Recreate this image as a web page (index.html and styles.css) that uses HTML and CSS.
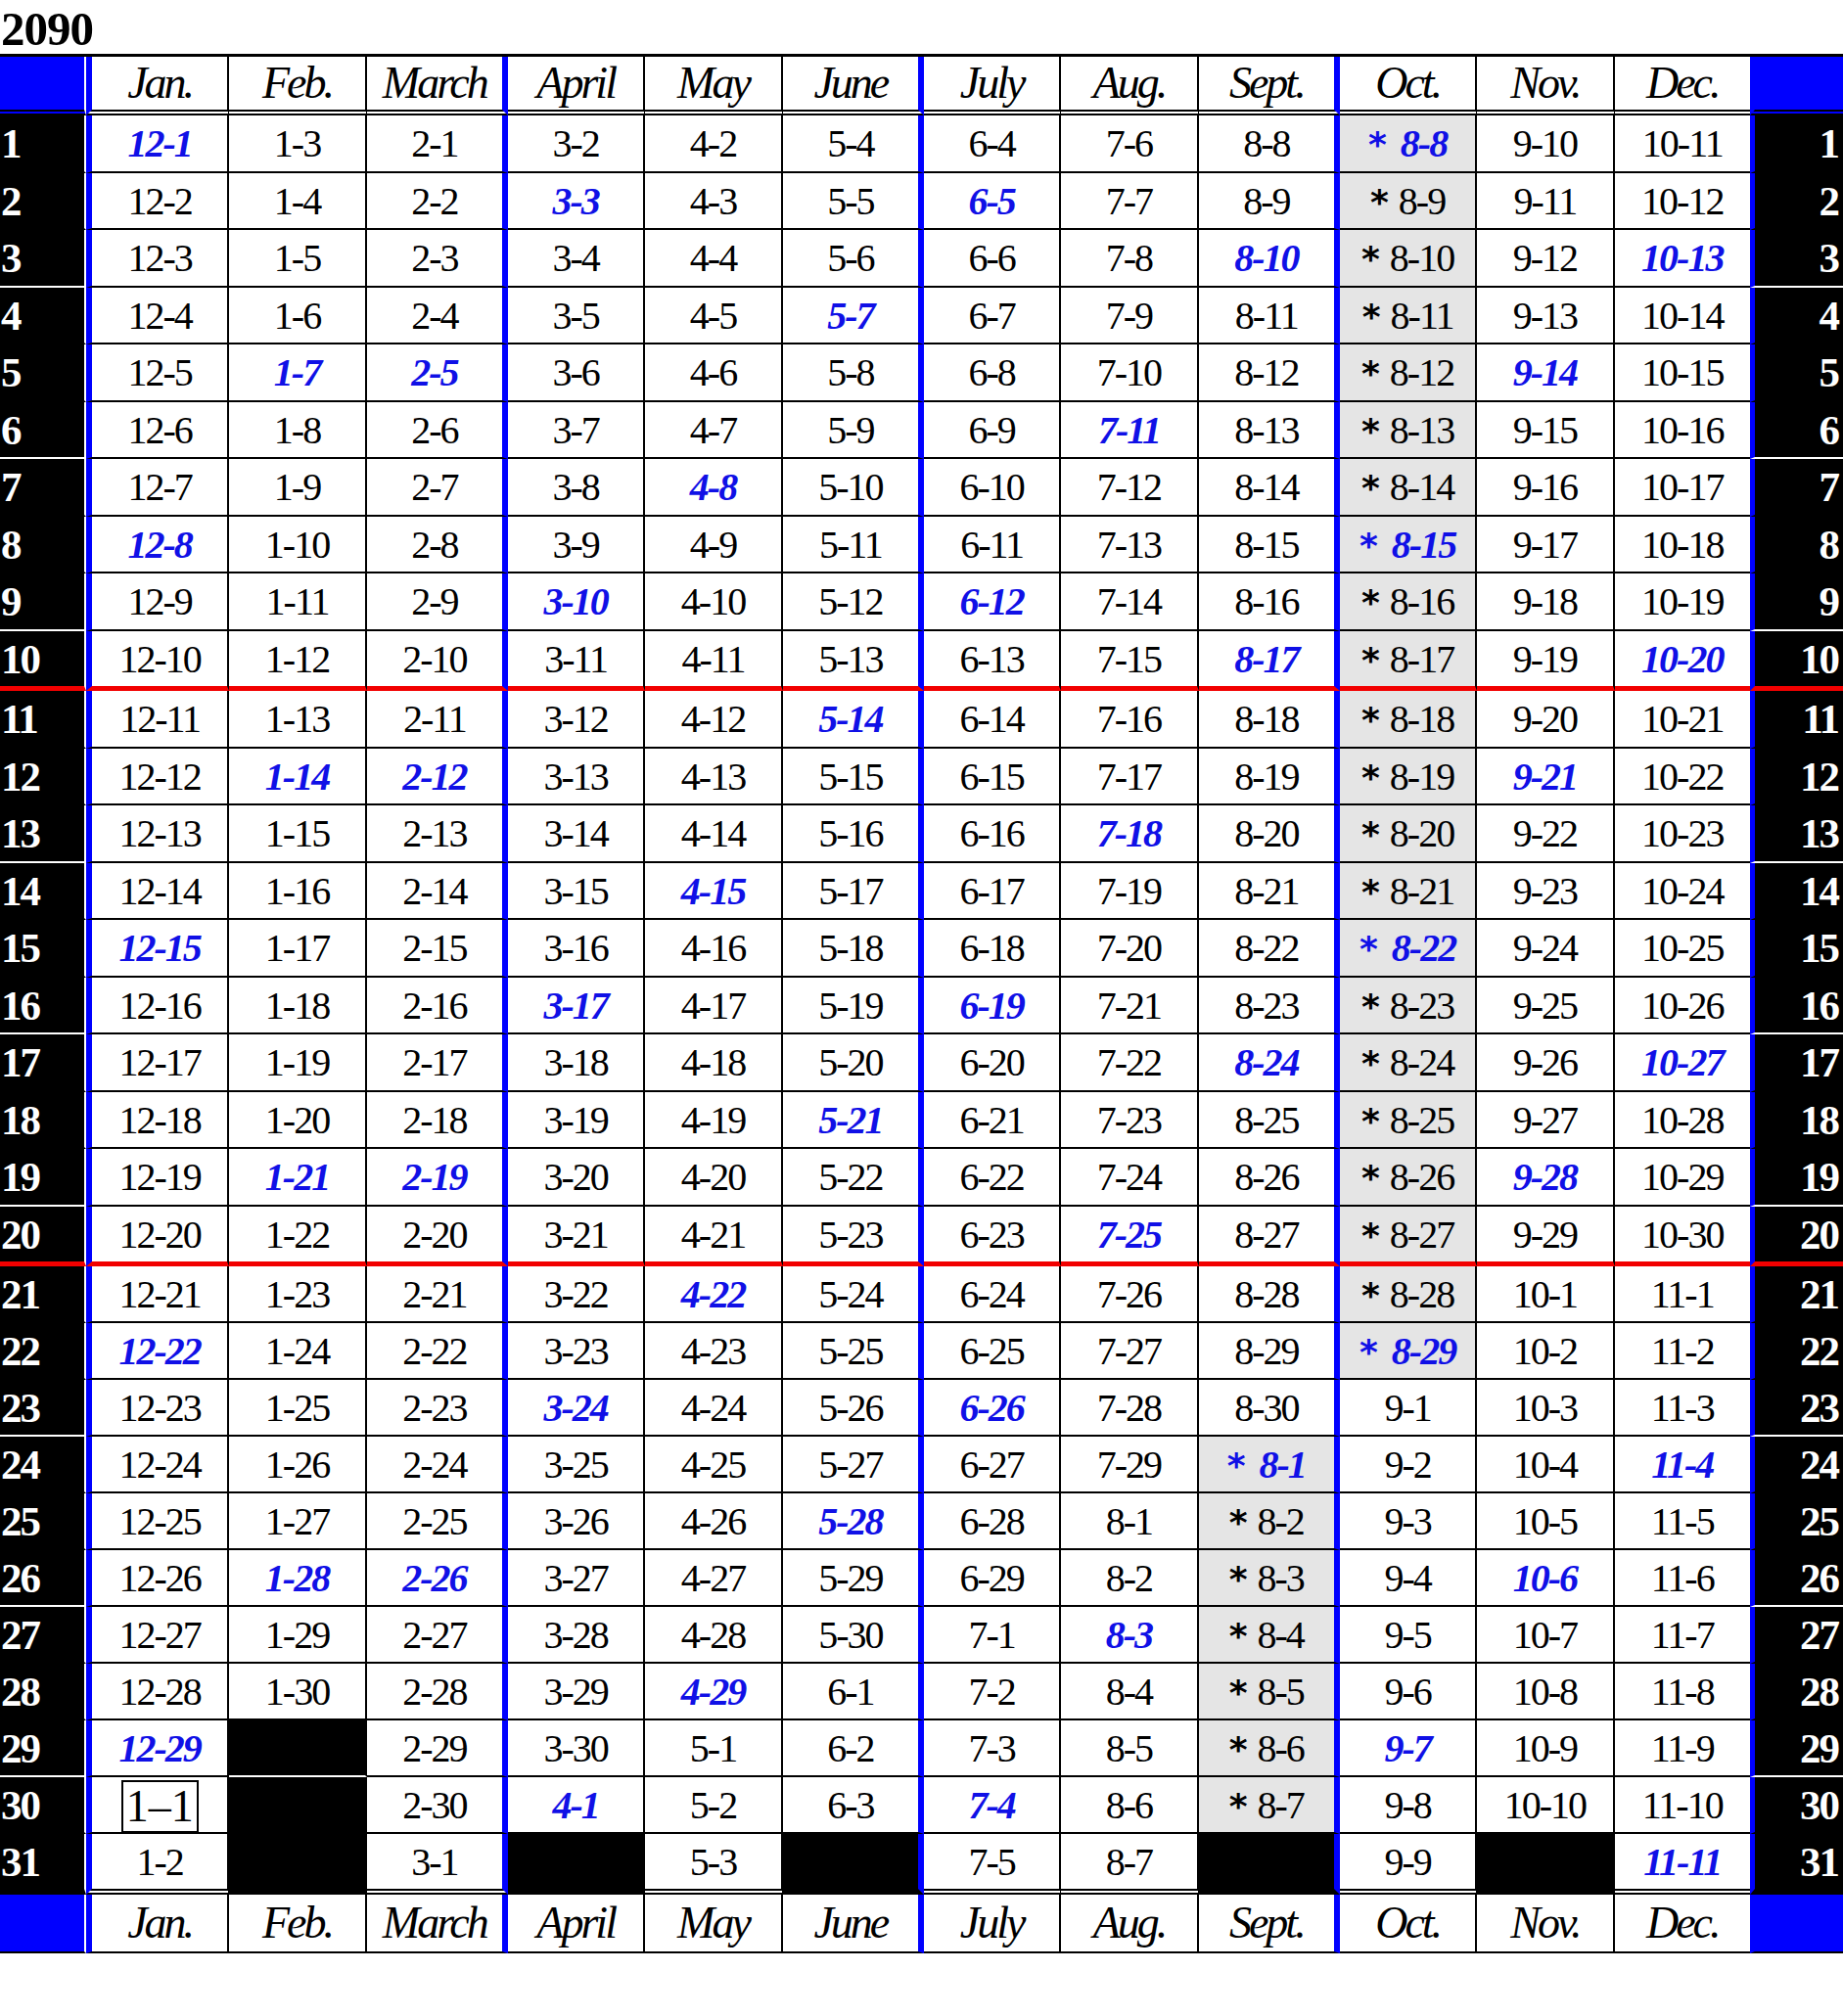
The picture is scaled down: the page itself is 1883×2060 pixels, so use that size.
FILE: index.html
```html
<!DOCTYPE html>
<html lang="en">
<head>
<meta charset="utf-8">
<title>2090</title>
<link rel="stylesheet" href="styles.css">
</head>
<body>
<div class="page">
  <div class="title">2090</div>
  <div class="cal">
    <div class="row mon head"><div class="l bl"></div><div>Jan.</div><div>Feb.</div><div>March</div><div>April</div><div>May</div><div>June</div><div>July</div><div>Aug.</div><div>Sept.</div><div>Oct.</div><div>Nov.</div><div>Dec.</div><div class="r bl"></div></div>

    <div class="row"><div class="l">1</div><div class="h">12-1</div><div>1-3</div><div>2-1</div><div>3-2</div><div>4-2</div><div>5-4</div><div>6-4</div><div>7-6</div><div>8-8</div><div class="g h"><b class="a">*</b> 8-8</div><div>9-10</div><div>10-11</div><div class="r">1</div></div>
    <div class="row"><div class="l">2</div><div>12-2</div><div>1-4</div><div>2-2</div><div class="h">3-3</div><div>4-3</div><div>5-5</div><div class="h">6-5</div><div>7-7</div><div>8-9</div><div class="g"><b class="a">*</b> 8-9</div><div>9-11</div><div>10-12</div><div class="r">2</div></div>
    <div class="row sep"><div class="l">3</div><div>12-3</div><div>1-5</div><div>2-3</div><div>3-4</div><div>4-4</div><div>5-6</div><div>6-6</div><div>7-8</div><div class="h">8-10</div><div class="g"><b class="a">*</b> 8-10</div><div>9-12</div><div class="h">10-13</div><div class="r">3</div></div>
    <div class="row"><div class="l">4</div><div>12-4</div><div>1-6</div><div>2-4</div><div>3-5</div><div>4-5</div><div class="h">5-7</div><div>6-7</div><div>7-9</div><div>8-11</div><div class="g"><b class="a">*</b> 8-11</div><div>9-13</div><div>10-14</div><div class="r">4</div></div>
    <div class="row"><div class="l">5</div><div>12-5</div><div class="h">1-7</div><div class="h">2-5</div><div>3-6</div><div>4-6</div><div>5-8</div><div>6-8</div><div>7-10</div><div>8-12</div><div class="g"><b class="a">*</b> 8-12</div><div class="h">9-14</div><div>10-15</div><div class="r">5</div></div>
    <div class="row sep"><div class="l">6</div><div>12-6</div><div>1-8</div><div>2-6</div><div>3-7</div><div>4-7</div><div>5-9</div><div>6-9</div><div class="h">7-11</div><div>8-13</div><div class="g"><b class="a">*</b> 8-13</div><div>9-15</div><div>10-16</div><div class="r">6</div></div>
    <div class="row"><div class="l">7</div><div>12-7</div><div>1-9</div><div>2-7</div><div>3-8</div><div class="h">4-8</div><div>5-10</div><div>6-10</div><div>7-12</div><div>8-14</div><div class="g"><b class="a">*</b> 8-14</div><div>9-16</div><div>10-17</div><div class="r">7</div></div>
    <div class="row"><div class="l">8</div><div class="h">12-8</div><div>1-10</div><div>2-8</div><div>3-9</div><div>4-9</div><div>5-11</div><div>6-11</div><div>7-13</div><div>8-15</div><div class="g h"><b class="a">*</b> 8-15</div><div>9-17</div><div>10-18</div><div class="r">8</div></div>
    <div class="row sep"><div class="l">9</div><div>12-9</div><div>1-11</div><div>2-9</div><div class="h">3-10</div><div>4-10</div><div>5-12</div><div class="h">6-12</div><div>7-14</div><div>8-16</div><div class="g"><b class="a">*</b> 8-16</div><div>9-18</div><div>10-19</div><div class="r">9</div></div>
    <div class="row red"><div class="l">10</div><div>12-10</div><div>1-12</div><div>2-10</div><div>3-11</div><div>4-11</div><div>5-13</div><div>6-13</div><div>7-15</div><div class="h">8-17</div><div class="g"><b class="a">*</b> 8-17</div><div>9-19</div><div class="h">10-20</div><div class="r">10</div></div>

    <div class="row"><div class="l">11</div><div>12-11</div><div>1-13</div><div>2-11</div><div>3-12</div><div>4-12</div><div class="h">5-14</div><div>6-14</div><div>7-16</div><div>8-18</div><div class="g"><b class="a">*</b> 8-18</div><div>9-20</div><div>10-21</div><div class="r">11</div></div>
    <div class="row"><div class="l">12</div><div>12-12</div><div class="h">1-14</div><div class="h">2-12</div><div>3-13</div><div>4-13</div><div>5-15</div><div>6-15</div><div>7-17</div><div>8-19</div><div class="g"><b class="a">*</b> 8-19</div><div class="h">9-21</div><div>10-22</div><div class="r">12</div></div>
    <div class="row sep"><div class="l">13</div><div>12-13</div><div>1-15</div><div>2-13</div><div>3-14</div><div>4-14</div><div>5-16</div><div>6-16</div><div class="h">7-18</div><div>8-20</div><div class="g"><b class="a">*</b> 8-20</div><div>9-22</div><div>10-23</div><div class="r">13</div></div>
    <div class="row"><div class="l">14</div><div>12-14</div><div>1-16</div><div>2-14</div><div>3-15</div><div class="h">4-15</div><div>5-17</div><div>6-17</div><div>7-19</div><div>8-21</div><div class="g"><b class="a">*</b> 8-21</div><div>9-23</div><div>10-24</div><div class="r">14</div></div>
    <div class="row"><div class="l">15</div><div class="h">12-15</div><div>1-17</div><div>2-15</div><div>3-16</div><div>4-16</div><div>5-18</div><div>6-18</div><div>7-20</div><div>8-22</div><div class="g h"><b class="a">*</b> 8-22</div><div>9-24</div><div>10-25</div><div class="r">15</div></div>
    <div class="row sep"><div class="l">16</div><div>12-16</div><div>1-18</div><div>2-16</div><div class="h">3-17</div><div>4-17</div><div>5-19</div><div class="h">6-19</div><div>7-21</div><div>8-23</div><div class="g"><b class="a">*</b> 8-23</div><div>9-25</div><div>10-26</div><div class="r">16</div></div>
    <div class="row"><div class="l">17</div><div>12-17</div><div>1-19</div><div>2-17</div><div>3-18</div><div>4-18</div><div>5-20</div><div>6-20</div><div>7-22</div><div class="h">8-24</div><div class="g"><b class="a">*</b> 8-24</div><div>9-26</div><div class="h">10-27</div><div class="r">17</div></div>
    <div class="row"><div class="l">18</div><div>12-18</div><div>1-20</div><div>2-18</div><div>3-19</div><div>4-19</div><div class="h">5-21</div><div>6-21</div><div>7-23</div><div>8-25</div><div class="g"><b class="a">*</b> 8-25</div><div>9-27</div><div>10-28</div><div class="r">18</div></div>
    <div class="row sep"><div class="l">19</div><div>12-19</div><div class="h">1-21</div><div class="h">2-19</div><div>3-20</div><div>4-20</div><div>5-22</div><div>6-22</div><div>7-24</div><div>8-26</div><div class="g"><b class="a">*</b> 8-26</div><div class="h">9-28</div><div>10-29</div><div class="r">19</div></div>
    <div class="row red"><div class="l">20</div><div>12-20</div><div>1-22</div><div>2-20</div><div>3-21</div><div>4-21</div><div>5-23</div><div>6-23</div><div class="h">7-25</div><div>8-27</div><div class="g"><b class="a">*</b> 8-27</div><div>9-29</div><div>10-30</div><div class="r">20</div></div>

    <div class="row lo"><div class="l">21</div><div>12-21</div><div>1-23</div><div>2-21</div><div>3-22</div><div class="h">4-22</div><div>5-24</div><div>6-24</div><div>7-26</div><div>8-28</div><div class="g"><b class="a">*</b> 8-28</div><div>10-1</div><div>11-1</div><div class="r">21</div></div>
    <div class="row lo"><div class="l">22</div><div class="h">12-22</div><div>1-24</div><div>2-22</div><div>3-23</div><div>4-23</div><div>5-25</div><div>6-25</div><div>7-27</div><div>8-29</div><div class="g h"><b class="a">*</b> 8-29</div><div>10-2</div><div>11-2</div><div class="r">22</div></div>
    <div class="row lo sep"><div class="l">23</div><div>12-23</div><div>1-25</div><div>2-23</div><div class="h">3-24</div><div>4-24</div><div>5-26</div><div class="h">6-26</div><div>7-28</div><div>8-30</div><div>9-1</div><div>10-3</div><div>11-3</div><div class="r">23</div></div>
    <div class="row lo"><div class="l">24</div><div>12-24</div><div>1-26</div><div>2-24</div><div>3-25</div><div>4-25</div><div>5-27</div><div>6-27</div><div>7-29</div><div class="g h"><b class="a">*</b> 8-1</div><div>9-2</div><div>10-4</div><div class="h">11-4</div><div class="r">24</div></div>
    <div class="row lo"><div class="l">25</div><div>12-25</div><div>1-27</div><div>2-25</div><div>3-26</div><div>4-26</div><div class="h">5-28</div><div>6-28</div><div>8-1</div><div class="g"><b class="a">*</b> 8-2</div><div>9-3</div><div>10-5</div><div>11-5</div><div class="r">25</div></div>
    <div class="row lo sep"><div class="l">26</div><div>12-26</div><div class="h">1-28</div><div class="h">2-26</div><div>3-27</div><div>4-27</div><div>5-29</div><div>6-29</div><div>8-2</div><div class="g"><b class="a">*</b> 8-3</div><div>9-4</div><div class="h">10-6</div><div>11-6</div><div class="r">26</div></div>
    <div class="row lo"><div class="l">27</div><div>12-27</div><div>1-29</div><div>2-27</div><div>3-28</div><div>4-28</div><div>5-30</div><div>7-1</div><div class="h">8-3</div><div class="g"><b class="a">*</b> 8-4</div><div>9-5</div><div>10-7</div><div>11-7</div><div class="r">27</div></div>
    <div class="row lo"><div class="l">28</div><div>12-28</div><div>1-30</div><div>2-28</div><div>3-29</div><div class="h">4-29</div><div>6-1</div><div>7-2</div><div>8-4</div><div class="g"><b class="a">*</b> 8-5</div><div>9-6</div><div>10-8</div><div>11-8</div><div class="r">28</div></div>
    <div class="row lo sep"><div class="l">29</div><div class="h">12-29</div><div class="x"></div><div>2-29</div><div>3-30</div><div>5-1</div><div>6-2</div><div>7-3</div><div>8-5</div><div class="g"><b class="a">*</b> 8-6</div><div class="h">9-7</div><div>10-9</div><div>11-9</div><div class="r">29</div></div>
    <div class="row lo"><div class="l">30</div><div><span class="box">1–1</span></div><div class="x"></div><div>2-30</div><div class="h">4-1</div><div>5-2</div><div>6-3</div><div class="h">7-4</div><div>8-6</div><div class="g"><b class="a">*</b> 8-7</div><div>9-8</div><div>10-10</div><div>11-10</div><div class="r">30</div></div>
    <div class="row last"><div class="l">31</div><div>1-2</div><div class="x"></div><div>3-1</div><div class="x"></div><div>5-3</div><div class="x"></div><div>7-5</div><div>8-7</div><div class="x"></div><div>9-9</div><div class="x"></div><div class="h">11-11</div><div class="r">31</div></div>

    <div class="row mon foot"><div class="l bl"></div><div>Jan.</div><div>Feb.</div><div>March</div><div>April</div><div>May</div><div>June</div><div>July</div><div>Aug.</div><div>Sept.</div><div>Oct.</div><div>Nov.</div><div>Dec.</div><div class="r bl"></div></div>
  </div>
</div>
</body>
</html>
```

FILE: styles.css
```css
* {
  box-sizing: border-box;
}

body {
  margin: 0;
  background: #fff;
  color: #000;
  font-family: "Liberation Serif", "DejaVu Serif", serif;
}

.page {
  width: 1883px;
}

.title {
  height: 55px;
  line-height: 59px;
  font-size: 49px;
  font-weight: bold;
  padding-left: 1px;
  letter-spacing: -1px;
}

.cal {
  border-top: 3px solid #000;
}

.row {
  display: grid;
  grid-template-columns: 88px 146.33px 140.33px 144.33px 140.33px 140.33px 144.33px 140.33px 140.33px 144.33px 140.33px 140.33px 138.33px 95px;
  height: 58.5px;
}

.row > div {
  border-bottom: 2px solid #000;
  border-right: 2px solid #000;
  text-align: center;
  font-size: 40px;
  line-height: 57px;
  letter-spacing: -2px;
  white-space: nowrap;
  overflow: hidden;
}

.row > div:nth-child(2) {
  border-left: 6px solid #0000ff;
}

.row > div:nth-child(4),
.row > div:nth-child(7),
.row > div:nth-child(10) {
  border-right: 6px solid #0000ff;
}

.row > div:nth-child(13) {
  border-right: 0;
}

/* label columns */
.row > .l {
  background: #000;
  color: #fff;
  font-weight: bold;
  font-size: 43px;
  text-align: left;
  padding-left: 1px;
  border-right: 2px solid #fff;
}

.row > .r {
  background: #000;
  color: #fff;
  font-weight: bold;
  font-size: 43px;
  text-align: right;
  padding-right: 5px;
  border-right: 0;
  border-left: 5px solid #0000ff;
}

.row.sep > .l,
.row.sep > .r,
.row.sep > .x {
  border-bottom-color: #fff;
}

.row.red {
  height: 61.5px;
}

.row.red > div {
  border-bottom: 5px solid #f20000;
}

.row.lo {
  height: 58px;
}

.row.last {
  height: 62px;
}

.row.last > div {
  border-bottom: 6px double #000;
}

/* month header / footer */
.row.mon > div {
  font-style: italic;
  font-size: 46px;
  letter-spacing: -3px;
}

.row.head {
  height: 60px;
}

.row.head > div {
  border-bottom: 6px double #000;
  line-height: 54px;
}

.row.foot {
  height: 60px;
}

.row.foot > div {
  border-bottom: 2px solid #000;
  line-height: 58px;
}

.row > .bl {
  background: #0000ff;
}

.row > .r.bl {
  border-left-color: #0000ff;
}

/* cell states */
.row > .h {
  color: #1010e6;
  font-weight: bold;
  font-style: italic;
}

.row > .g {
  background: #e5e5e5;
}

.row > .x {
  background: #000;
}

.a {
  font-family: "DejaVu Sans", "Liberation Sans", sans-serif;
  font-weight: bold;
  font-style: normal;
  font-size: 36px;
  letter-spacing: 0;
  margin-right: 2px;
}

.g.h .a {
  margin-right: 6px;
}

.box {
  display: inline-block;
  vertical-align: middle;
  border: 2px solid #000;
  padding: 0 3px;
  font-size: 46px;
  line-height: 50px;
  letter-spacing: 0;
  margin-top: -6px;
}
```
